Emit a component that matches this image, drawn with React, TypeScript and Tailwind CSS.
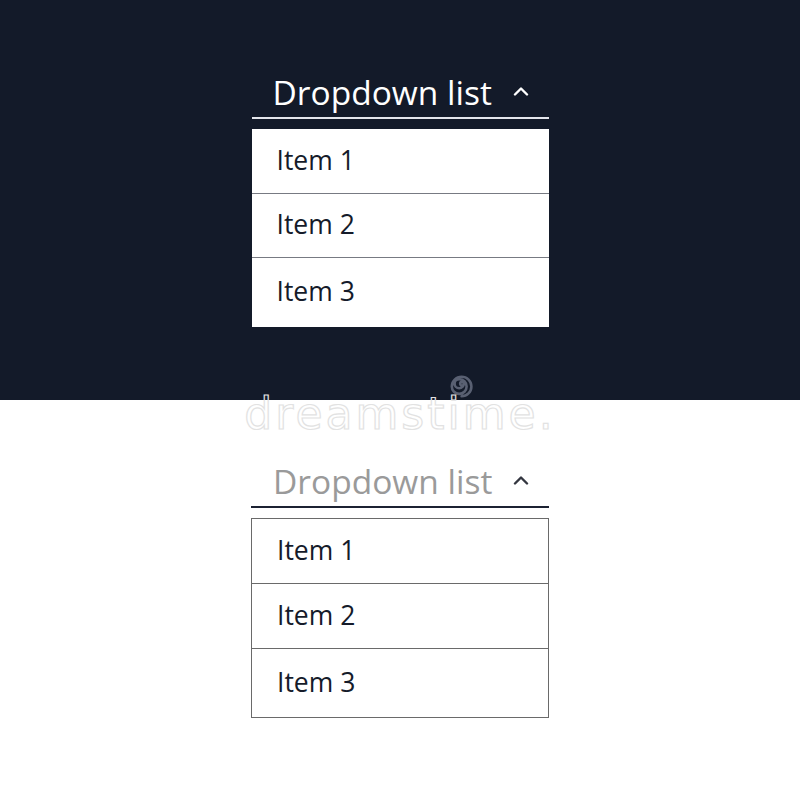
import React from "react";

const ITEMS = ["Item 1", "Item 2", "Item 3"];

function Chevron({ color }: { color: string }) {
  return (
    <svg width="16" height="10" viewBox="0 0 16 10" fill="none" className="shrink-0 -mt-[3px]">
      <polyline points="2,8.5 8,2.5 14,8.5" stroke={color} strokeWidth="2.4" strokeLinecap="round" strokeLinejoin="round" />
    </svg>
  );
}

function Spiral() {
  return (
    <svg width="28" height="28" viewBox="0 0 28 28" fill="none">
      <path
        d="M14 14.5a1.8 1.8 0 1 1 1.8-1.8a4.6 4.6 0 1 1-4.6-4.6a7.4 7.4 0 1 1-7.4 7.4a9.8 9.8 0 1 1 9.8 9.8"
        stroke="#596072"
        strokeWidth="2.6"
        strokeLinecap="round"
      />
    </svg>
  );
}

export default function App() {
  return (
    <div className="relative w-[800px] h-[800px] overflow-hidden bg-white font-['Open_Sans','Noto_Sans',sans-serif]">
      {/* Dark variant */}
      <div className="h-[400px] bg-[#131a29] flex flex-col items-center pt-[76px]">
        <div className="w-[297px]">
          <div className="flex items-center justify-between pl-[21px] pr-[20px] pb-[7px] border-b-2 border-[#e4e6ec]">
            <span className="text-[33.5px] leading-none text-white">Dropdown list</span>
            <Chevron color="#ffffff" />
          </div>
          <div className="mt-[10px] bg-white">
            {ITEMS.map((item, i) => (
              <div
                key={item}
                className={`flex items-center pl-[25px] text-[26.5px] text-[#151b2a] ${
                  i === 0 ? "h-[65px] border-b border-[#777a82]" : i === 1 ? "h-[64px] border-b border-[#777a82]" : "h-[69px]"
                }`}
              >
                {item}
              </div>
            ))}
          </div>
        </div>
      </div>

      {/* Light variant */}
      <div className="flex flex-col items-center pt-[65px]">
        <div className="w-[298px]">
          <div className="flex items-center justify-between pl-[22px] pr-[20px] pb-[7px] border-b-2 border-[#1c2232]">
            <span className="text-[33.5px] leading-none text-[#9a9a9a]">Dropdown list</span>
            <Chevron color="#333640" />
          </div>
          <div className="mt-[10px] border border-[#6a6a6a]">
            {ITEMS.map((item, i) => (
              <div
                key={item}
                className={`flex items-center pl-[25px] text-[26.5px] text-[#151b2a] ${
                  i < 2 ? "h-[65px] border-b border-[#6a6a6a]" : "h-[68px]"
                }`}
              >
                {item}
              </div>
            ))}
          </div>
        </div>
      </div>

      {/* Watermark */}
      <div className="absolute left-[448px] top-[371px] pointer-events-none">
        <Spiral />
      </div>
      <div className="absolute left-0 right-0 top-[392px] flex justify-center pointer-events-none">
        <span className="text-[44px] leading-none tracking-[3px] font-['DejaVu_Sans',sans-serif] text-transparent [-webkit-text-stroke:1.2px_#e2e2e2]">
          dreamstime.
        </span>
      </div>
    </div>
  );
}
